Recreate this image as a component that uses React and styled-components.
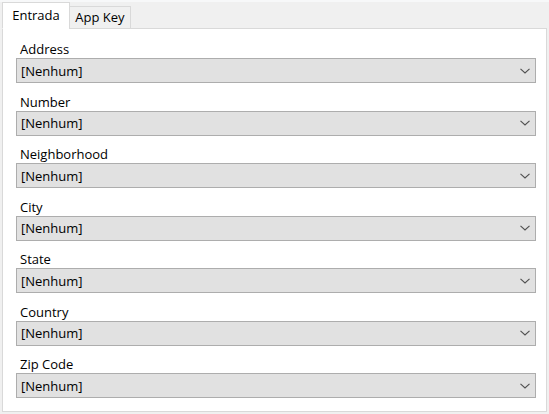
import React from 'react';
import styled, { createGlobalStyle } from 'styled-components';

const GlobalStyle = createGlobalStyle`
  html, body {
    margin: 0;
    padding: 0;
    background: #f0f0f0;
  }
  body {
    font-family: "Open Sans", "Noto Sans", "Liberation Sans", sans-serif;
    font-size: 13px;
    color: #000;
  }
`;

const Window = styled.div`
  width: 549px;
  height: 414px;
  display: flex;
  flex-direction: column;
  background: #f0f0f0;
  border-top: 2px solid #f7f8f9;
  box-sizing: border-box;
`;

const TabStrip = styled.div`
  display: flex;
  align-items: flex-end;
  height: 27px;
  padding-left: 2px;
  margin-bottom: -1px;
  position: relative;
  z-index: 1;
`;

const Tab = styled.div`
  box-sizing: border-box;
  height: ${({ active }) => (active ? '27px' : '23px')};
  width: ${({ w }) => w}px;
  text-align: center;
  padding-top: ${({ active }) => (active ? '3px' : '1px')};
  background: ${({ active }) => (active ? '#fff' : '#f0f0f0')};
  border: 1px solid #d9d9d9;
  border-bottom: ${({ active }) => (active ? '1px solid #fff' : '1px solid #d9d9d9')};
  margin-left: ${({ active }) => (active ? '0' : '-1px')};
  font-size: 13px;
  line-height: 18px;
  white-space: nowrap;
`;

const Panel = styled.div`
  flex: 1;
  margin: 0 2px 2px 2px;
  background: #fff;
  border: 1px solid #d9d9d9;
  display: flex;
  flex-direction: column;
  gap: 10.5px;
  padding: 12px 10px 0 13px;
`;

const Field = styled.div`
  display: flex;
  flex-direction: column;
`;

const Label = styled.div`
  padding-left: 4px;
  height: 17px;
  line-height: 16px;
  font-size: 13px;
`;

const Combo = styled.div`
  box-sizing: border-box;
  height: 25px;
  display: flex;
  align-items: center;
  justify-content: space-between;
  background: #e1e1e1;
  border: 1px solid #adadad;
  padding: 0 5px 0 4px;
  font-size: 13px;
`;

const Chevron = () => (
  <svg width="10" height="6" viewBox="0 0 10 6">
    <path d="M0.5 0.8 L5 5 L9.5 0.8" fill="none" stroke="#505050" strokeWidth="1.1" />
  </svg>
);

const fields = ['Address', 'Number', 'Neighborhood', 'City', 'State', 'Country', 'Zip Code'];

export default function App() {
  return (
    <>
      <GlobalStyle />
      <Window>
        <TabStrip>
          <Tab active w={68}>Entrada</Tab>
          <Tab w={62}>App Key</Tab>
        </TabStrip>
        <Panel>
          {fields.map((f) => (
            <Field key={f}>
              <Label>{f}</Label>
              <Combo>
                <span>[Nenhum]</span>
                <Chevron />
              </Combo>
            </Field>
          ))}
        </Panel>
      </Window>
    </>
  );
}
